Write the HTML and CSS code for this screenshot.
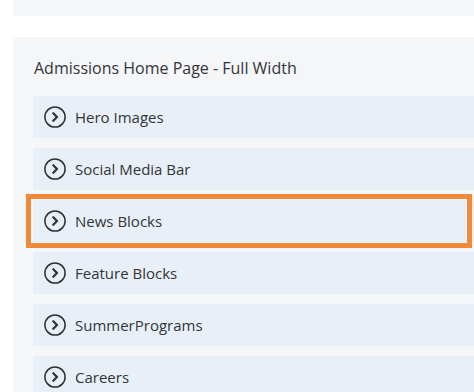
FILE: index.html
```html
<!DOCTYPE html>
<html>
<head>
<meta charset="utf-8">
<link rel="stylesheet" href="styles.css">
</head>
<body>
<div class="topbar"></div>
<section class="panel">
  <h2 class="title">Admissions Home Page - Full Width</h2>
  <div class="rows">
    <div class="row"><svg class="chev" viewBox="0 0 22 22"><circle cx="11" cy="11" r="10.1"/><path d="M9.3 7.2 L13 11 L9.3 14.8"/></svg><span>Hero Images</span></div>
    <div class="row"><svg class="chev" viewBox="0 0 22 22"><circle cx="11" cy="11" r="10.1"/><path d="M9.3 7.2 L13 11 L9.3 14.8"/></svg><span>Social Media Bar</span></div>
    <div class="row highlighted"><svg class="chev" viewBox="0 0 22 22"><circle cx="11" cy="11" r="10.1"/><path d="M9.3 7.2 L13 11 L9.3 14.8"/></svg><span>News Blocks</span><div class="highlight"></div></div>
    <div class="row"><svg class="chev" viewBox="0 0 22 22"><circle cx="11" cy="11" r="10.1"/><path d="M9.3 7.2 L13 11 L9.3 14.8"/></svg><span>Feature Blocks</span></div>
    <div class="row"><svg class="chev" viewBox="0 0 22 22"><circle cx="11" cy="11" r="10.1"/><path d="M9.3 7.2 L13 11 L9.3 14.8"/></svg><span>SummerPrograms</span></div>
    <div class="row"><svg class="chev" viewBox="0 0 22 22"><circle cx="11" cy="11" r="10.1"/><path d="M9.3 7.2 L13 11 L9.3 14.8"/></svg><span>Careers</span></div>
  </div>
</section>
</body>
</html>
```
FILE: styles.css
```css
html, body {
  margin: 0;
  padding: 0;
  background: #ffffff;
  font-family: "Open Sans", "Noto Sans", sans-serif;
  color: #333538;
  overflow: hidden;
}
.topbar {
  margin-left: 13px;
  height: 16px;
  background: #f5f6f8;
}
.panel {
  margin: 21px 0 0 13px;
  padding: 20px 0 0 20px;
  background: #f5f6f8;
  height: 335px;
  overflow: hidden;
}
.title {
  margin: 0 0 17px 1px;
  font-size: 16px;
  line-height: 22px;
  font-weight: 400;
  color: #333538;
}
.rows {
  display: flex;
  flex-direction: column;
  gap: 10px;
}
.row {
  position: relative;
  display: flex;
  align-items: center;
  gap: 9px;
  height: 42px;
  padding-left: 11px;
  background: #e8eff7;
  font-size: 15px;
}
.chev {
  width: 22px;
  height: 22px;
  flex: none;
}
.chev circle {
  fill: none;
  stroke: #2f3133;
  stroke-width: 1.5;
}
.chev path {
  fill: none;
  stroke: #2f3133;
  stroke-width: 2.2;
  stroke-linecap: round;
  stroke-linejoin: round;
}
.highlight {
  position: absolute;
  left: -7px;
  top: -6px;
  width: 446px;
  height: 54px;
  box-sizing: border-box;
  border: 5px solid #ef8a3a;
}
```
